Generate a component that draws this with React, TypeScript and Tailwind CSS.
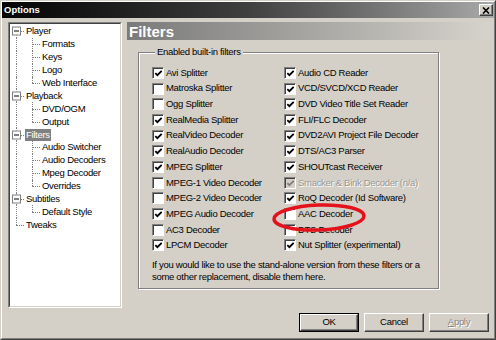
import React from "react";

type TreeRow = {
  label: string;
  level: 0 | 1;
  expand?: boolean;
  first?: boolean;
  lastTop?: boolean;
  lastChild?: boolean;
  selected?: boolean;
};

const tree: TreeRow[] = [
  { label: "Player", level: 0, expand: true, first: true },
  { label: "Formats", level: 1 },
  { label: "Keys", level: 1 },
  { label: "Logo", level: 1 },
  { label: "Web Interface", level: 1, lastChild: true },
  { label: "Playback", level: 0, expand: true },
  { label: "DVD/OGM", level: 1 },
  { label: "Output", level: 1, lastChild: true },
  { label: "Filters", level: 0, expand: true, selected: true },
  { label: "Audio Switcher", level: 1 },
  { label: "Audio Decoders", level: 1 },
  { label: "Mpeg Decoder", level: 1 },
  { label: "Overrides", level: 1, lastChild: true },
  { label: "Subtitles", level: 0, expand: true },
  { label: "Default Style", level: 1, lastChild: true },
  { label: "Tweaks", level: 0, lastTop: true },
];

const leftFilters: [string, boolean][] = [
  ["Avi Splitter", true],
  ["Matroska Splitter", false],
  ["Ogg Splitter", false],
  ["RealMedia Splitter", true],
  ["RealVideo Decoder", true],
  ["RealAudio Decoder", true],
  ["MPEG Splitter", true],
  ["MPEG-1 Video Decoder", false],
  ["MPEG-2 Video Decoder", false],
  ["MPEG Audio Decoder", true],
  ["AC3 Decoder", false],
  ["LPCM Decoder", true],
];

const rightFilters: [string, boolean, boolean?][] = [
  ["Audio CD Reader", true],
  ["VCD/SVCD/XCD Reader", true],
  ["DVD Video Title Set Reader", true],
  ["FLI/FLC Decoder", true],
  ["DVD2AVI Project File Decoder", true],
  ["DTS/AC3 Parser", true],
  ["SHOUTcast Receiver", true],
  ["Smacker & Bink Decoder (n/a)", true, true],
  ["RoQ Decoder (Id Software)", true],
  ["AAC Decoder", false],
  ["DTS Decoder", false],
  ["Nut Splitter (experimental)", true],
];

function TreeItem({ row }: { row: TreeRow }) {
  return (
    <div className="flex h-[12.9px] items-center">
      {/* level 0 guide */}
      <div className="relative h-full w-[14px] shrink-0">
        {!row.first && (
          <span
            className={`absolute left-[6px] top-0 w-0 border-l border-dotted border-[#808080] ${
              row.lastTop ? "h-1/2" : "h-full"
            }`}
          />
        )}
        {row.first && <span className="absolute left-[6px] top-1/2 h-1/2 w-0 border-l border-dotted border-[#808080]" />}
        {row.level === 0 && (
          <span className="absolute left-[6px] right-0 top-1/2 h-0 border-t border-dotted border-[#808080]" />
        )}
        {row.expand && (
          <span className="absolute left-[2px] top-1/2 grid h-[9px] w-[9px] -translate-y-1/2 place-items-center border border-[#808080] bg-white">
            <span className="h-px w-[5px] bg-black" />
          </span>
        )}
      </div>
      {row.level === 1 && (
        <div className="relative h-full w-[16px] shrink-0">
          <span
            className={`absolute left-[8px] top-0 w-0 border-l border-dotted border-[#808080] ${
              row.lastChild ? "h-1/2" : "h-full"
            }`}
          />
          <span className="absolute left-[8px] right-0 top-1/2 h-0 border-t border-dotted border-[#808080]" />
        </div>
      )}
      <span
        className={`ml-[1px] whitespace-nowrap px-[1px] leading-[12px] ${
          row.selected ? "bg-[#808080] text-white" : "text-black"
        }`}
      >
        {row.label}
      </span>
    </div>
  );
}

function CheckBox({ checked, disabled }: { checked: boolean; disabled?: boolean }) {
  return (
    <span
      className={`grid h-[12px] w-[12px] shrink-0 place-items-center border border-b-white border-l-[#808080] border-r-white border-t-[#808080] shadow-[inset_1px_1px_0_#404040] ${
        disabled ? "bg-[#d4d0c8]" : "bg-white"
      }`}
    >
      {checked && (
        <svg width="8" height="8" viewBox="0 0 8 8" className="translate-x-[0.5px] translate-y-[0.5px]">
          <polyline
            points="0.8,3.6 2.9,5.7 7.2,1.4"
            fill="none"
            stroke={disabled ? "#808080" : "#000"}
            strokeWidth="1.9"
          />
        </svg>
      )}
    </span>
  );
}

function FilterRow({ label, checked, disabled }: { label: string; checked: boolean; disabled?: boolean }) {
  return (
    <div className="flex h-[15.7px] items-center">
      <CheckBox checked={checked} disabled={disabled} />
      <span
        className={`ml-[2px] whitespace-nowrap ${
          disabled ? "text-[#9a9894] [text-shadow:1px_1px_0_#fff]" : "text-black"
        }`}
      >
        {label}
      </span>
    </div>
  );
}

function Button({ children, primary, disabled }: { children: React.ReactNode; primary?: boolean; disabled?: boolean }) {
  const inner = (
    <div
      className={`flex h-full w-full items-center justify-center border border-b-[#404040] border-l-white border-r-[#404040] border-t-white bg-[#d4d0c8] shadow-[inset_-1px_-1px_0_#808080] ${
        disabled ? "text-[#8a8883] [text-shadow:1px_1px_0_#fff]" : "text-black"
      }`}
    >
      {children}
    </div>
  );
  return primary ? (
    <div className="h-[19px] w-[60px] border border-black">{inner}</div>
  ) : (
    <div className="h-[19px] w-[60px]">{inner}</div>
  );
}

export default function App() {
  return (
    <div className="relative h-[340px] w-[496px] overflow-hidden border border-b-[#404040] border-l-[#d4d0c8] border-r-[#404040] border-t-[#d4d0c8] bg-[#d4d0c8] font-['Liberation_Sans',Arial,sans-serif] text-[9.5px] tracking-[-0.3px] text-black">
      <div className="flex h-full flex-col border border-b-[#808080] border-l-white border-r-[#808080] border-t-white">
        {/* title bar */}
        <div className="flex h-[16px] items-center justify-between bg-gradient-to-r from-[#050505] via-[#404040] to-[#a9a9a9] pl-[2px] pr-[1px]">
          <span className="text-[9.5px] font-bold tracking-normal text-white">Options</span>
          <div className="grid h-[12px] w-[14px] place-items-center border border-b-[#404040] border-l-white border-r-[#404040] border-t-white bg-[#d4d0c8] shadow-[inset_-1px_-1px_0_#808080]">
            <svg width="8" height="7" viewBox="0 0 8 7">
              <path d="M1 0.5 L7 6.5 M7 0.5 L1 6.5" stroke="#000" strokeWidth="1.6" />
            </svg>
          </div>
        </div>

        {/* content */}
        <div className="flex gap-[5px] pl-[6px] pt-[4px]">
          {/* tree */}
          <div className="h-[286px] w-[114px] border border-b-white border-l-[#808080] border-r-white border-t-[#808080]">
            <div className="h-full w-full border border-b-[#d4d0c8] border-l-[#404040] border-r-[#d4d0c8] border-t-[#404040] bg-white pt-[1px]">
              {tree.map((row) => (
                <TreeItem key={row.label} row={row} />
              ))}
            </div>
          </div>

          {/* right panel */}
          <div className="w-[363px]">
            <div className="flex h-[18px] items-center bg-gradient-to-r from-[#7a7a7a] to-[#d6d3cc] pl-[2px]">
              <span className="text-[15px] font-bold leading-none tracking-normal text-white">Filters</span>
            </div>
            <fieldset className="ml-[11px] mt-[6px] h-[243px] w-[301px] border border-[#808080] pl-[13px] pt-[7px] shadow-[inset_1px_1px_0_#fff,1px_1px_0_#fff]">
              <legend className="ml-[3px] bg-[#d4d0c8] px-[2px] leading-[12px]">Enabled built-in filters</legend>
              <div className="flex">
                <div className="w-[132px]">
                  {leftFilters.map(([l, c]) => (
                    <FilterRow key={l} label={l} checked={c} />
                  ))}
                </div>
                <div>
                  {rightFilters.map(([l, c, d]) => (
                    <FilterRow key={l} label={l} checked={c} disabled={d} />
                  ))}
                </div>
              </div>
              <p className="mt-[6px] leading-[12px]">
                If you would like to use the stand-alone version from these filters or a
                <br />
                some other replacement, disable them here.
              </p>
            </fieldset>
          </div>
        </div>

        {/* buttons */}
        <div className="mt-[5px] flex justify-end gap-[5px] pr-[5px]">
          <Button primary>OK</Button>
          <Button>Cancel</Button>
          <Button disabled>
            <span>
              <span className="underline">A</span>pply
            </span>
          </Button>
        </div>
      </div>

      {/* red annotation ellipse */}
      <svg className="pointer-events-none absolute left-[269px] top-[201px]" width="98" height="32" viewBox="0 0 98 32">
        <ellipse cx="49" cy="15.5" rx="45" ry="12.5" fill="none" stroke="#e4121b" strokeWidth="3.5" transform="rotate(-2 49 15.5)" />
      </svg>
    </div>
  );
}
